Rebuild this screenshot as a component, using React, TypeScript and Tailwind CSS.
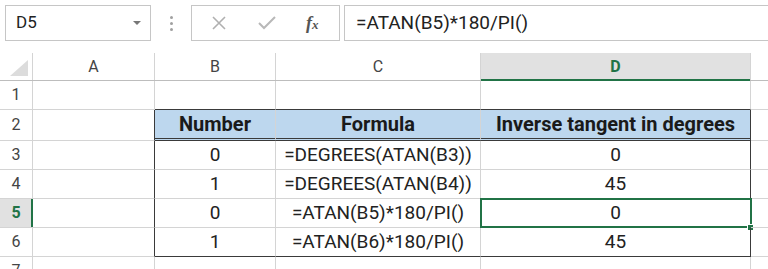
import React from "react";

const font = { fontFamily: "Roboto, 'Open Sans', 'Liberation Sans', sans-serif" };

const W = ["w-[33px]", "w-[122px]", "w-[121px]", "w-[205px]", "w-[270px]", "flex-1"];

function Cell({
  className = "",
  children,
}: {
  className?: string;
  children?: React.ReactNode;
}) {
  return (
    <div className={`relative flex h-full items-center justify-center shrink-0 whitespace-nowrap ${className}`}>
      {children}
    </div>
  );
}

const rows = [
  { n: "1" },
  { n: "2", b: "Number", c: "Formula", d: "Inverse tangent in degrees", head: true },
  { n: "3", b: "0", c: "=DEGREES(ATAN(B3))", d: "0" },
  { n: "4", b: "1", c: "=DEGREES(ATAN(B4))", d: "45" },
  { n: "5", b: "0", c: "=ATAN(B5)*180/PI()", d: "0", sel: true },
  { n: "6", b: "1", c: "=ATAN(B6)*180/PI()", d: "45", last: true },
  { n: "7" },
];

export default function App() {
  return (
    <div className="w-[768px] h-[269px] overflow-hidden bg-white" style={font}>
      {/* toolbar */}
      <div className="flex h-[53px] items-start pt-[5px] pl-[5px]">
        <div className="flex h-[36px] w-[146px] items-center justify-between border border-[#c6c6c6] pl-[10px] pr-[9px]">
          <span className="text-[17px] text-[#222]">D5</span>
          <span className="h-0 w-0 border-l-[4px] border-r-[4px] border-t-[4px] border-l-transparent border-r-transparent border-t-[#777]" />
        </div>
        <div className="flex h-[36px] w-[40px] flex-col items-center justify-center gap-[3px]">
          <span className="h-[3px] w-[3px] rounded-full bg-[#a0a0a0]" />
          <span className="h-[3px] w-[3px] rounded-full bg-[#a0a0a0]" />
          <span className="h-[3px] w-[3px] rounded-full bg-[#a0a0a0]" />
        </div>
        <div className="flex h-[36px] w-[149px] items-center border border-[#c6c6c6]">
          <svg width="14" height="14" viewBox="0 0 14 14" className="ml-[20px]">
            <path d="M1 1 L13 13 M13 1 L1 13" stroke="#b0b0b0" strokeWidth="1.6" />
          </svg>
          <svg width="18" height="14" viewBox="0 0 18 14" className="ml-[32px]">
            <path d="M1 7 L6 12 L17 1" stroke="#b8b8b8" strokeWidth="2" fill="none" />
          </svg>
          <span
            className="ml-[30px] text-[18px] italic font-bold text-[#555] leading-none"
            style={{ fontFamily: "'Liberation Serif', serif" }}
          >
            f<span className="text-[13px]">x</span>
          </span>
        </div>
        <div className="ml-[4px] flex h-[36px] flex-1 items-center border border-[#c6c6c6] border-r-0 pl-[11px]">
          <span className="text-[19px] text-[#222]">=ATAN(B5)*180/PI()</span>
        </div>
      </div>

      {/* column headers */}
      <div className="flex h-[28px] border-b border-[#bdbdbd] text-[16px] text-[#444]">
        <Cell className={`${W[0]} border-r border-[#d4d4d4]`}>
          <svg width="18" height="16" viewBox="0 0 18 16" className="absolute right-[4px] bottom-[4px]">
            <path d="M18 0 L18 16 L0 16 Z" fill="#dcdcdc" />
          </svg>
        </Cell>
        <Cell className={`${W[1]} border-r border-[#d4d4d4]`}>A</Cell>
        <Cell className={`${W[2]} border-r border-[#d4d4d4]`}>B</Cell>
        <Cell className={`${W[3]} border-r border-[#d4d4d4]`}>C</Cell>
        <Cell className={`${W[4]} border-r border-[#d4d4d4] bg-[#e1e1e1] font-bold text-[#217346]`}>
          D
          <span className="absolute bottom-[-1px] left-0 right-0 h-[2px] bg-[#217346]" />
        </Cell>
        <Cell className={`${W[5]}`} />
      </div>

      {rows.map((r, i) => {
        const inTable = i >= 1 && i <= 5;
        const topOfTable = i === 0;
        const bb = r.head
          ? "border-b-[3px] border-double border-b-[#3a3a3a]"
          : topOfTable || r.last
          ? "border-b border-b-[#3a3a3a]"
          : "border-b border-b-[#d4d4d4]";
        const bbE = "border-b border-b-[#d4d4d4]";
        const bg = r.head ? "bg-[#bdd7ee]" : "";
        const txt = r.head
          ? "font-bold text-[20px] text-[#1a1a1a]"
          : "text-[19px] text-[#222]";
        return (
          <div key={r.n} className={`flex ${r.head ? "h-[31px]" : "h-[29px]"}`}>
            <Cell
              className={`${W[0]} border-r border-b border-[#d4d4d4] text-[16px] ${
                r.sel ? "bg-[#e1e1e1] font-bold text-[#217346]" : "text-[#444]"
              }`}
            >
              {r.n}
              {r.sel && <span className="absolute right-[-1px] top-0 bottom-0 w-[2px] bg-[#217346]" />}
            </Cell>
            <Cell
              className={`${W[1]} border-r ${inTable ? "border-r-[#3a3a3a]" : "border-r-[#d4d4d4]"} ${bbE}`}
            />
            <Cell className={`${W[2]} border-r border-r-[#d4d4d4] ${bb} ${bg} ${txt}`}>{r.b}</Cell>
            <Cell className={`${W[3]} border-r border-r-[#d4d4d4] ${bb} ${bg} ${txt}`}>{r.c}</Cell>
            <Cell
              className={`${W[4]} border-r ${inTable ? "border-r-[#3a3a3a]" : "border-r-[#d4d4d4]"} ${bb} ${bg} ${txt}`}
            >
              {r.d}
              {r.sel && (
                <>
                  <span className="absolute left-[-1px] right-[-2px] top-[-1px] bottom-[-1px] border-2 border-[#217346]" />
                  <span className="absolute right-[-4px] bottom-[-4px] h-[7px] w-[7px] border border-white bg-[#217346]" />
                </>
              )}
            </Cell>
            <Cell className={`${W[5]} ${bbE}`} />
          </div>
        );
      })}
    </div>
  );
}
